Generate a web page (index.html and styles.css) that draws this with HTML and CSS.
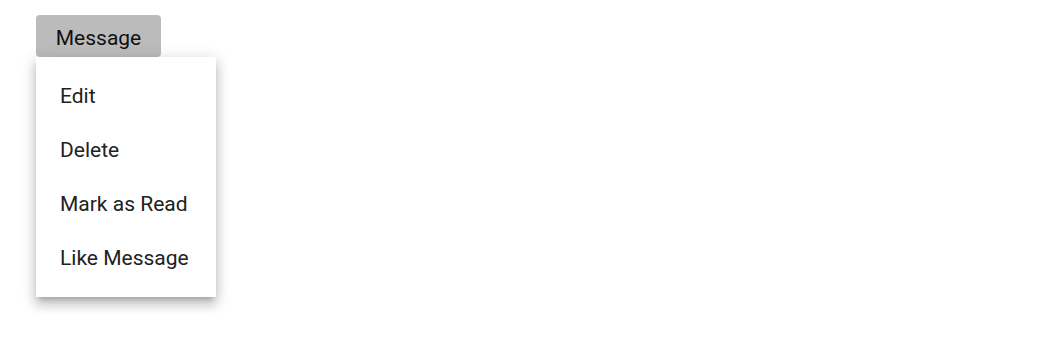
FILE: index.html
```html
<!DOCTYPE html>
<html>
<head>
<meta charset="utf-8">
<link rel="stylesheet" href="styles.css">
</head>
<body>
<div class="wrap">
  <button class="btn">Message</button>
  <ul class="menu">
    <li class="item">Edit</li>
    <li class="item">Delete</li>
    <li class="item">Mark as Read</li>
    <li class="item">Like Message</li>
  </ul>
</div>
</body>
</html>
```
FILE: styles.css
```css
html, body { margin: 0; padding: 0; background: #fff; }
body { font-family: Roboto, "Liberation Sans", sans-serif; min-height: 341px; }
.wrap { padding: 15px 0 0 36px; display: flex; flex-direction: column; align-items: flex-start; }
.btn {
  -webkit-appearance: none; appearance: none;
  width: 125px; height: 42px; box-sizing: border-box;
  background: #bbbbbb; border: none; border-radius: 4px;
  font-family: Roboto, "Liberation Sans", sans-serif; font-size: 21px;
  color: #111; padding: 3px 0 0 0; margin: 0;
}
.menu {
  list-style: none; margin: 0; padding: 12px 0;
  width: 180px; background: #fff;
  box-shadow: 0 5px 5px -3px rgba(0,0,0,.2), 0 8px 10px 1px rgba(0,0,0,.14), 0 3px 14px 2px rgba(0,0,0,.12);
}
.item {
  height: 54px; display: flex; align-items: center;
  padding-left: 24px; font-size: 21px; color: #212121;
}
```
